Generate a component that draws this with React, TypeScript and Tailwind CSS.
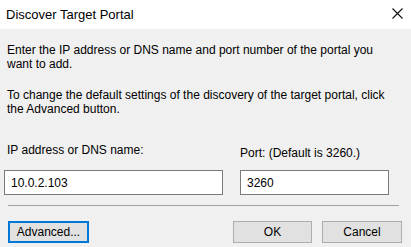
import React from 'react';

const font = { fontFamily: '"Liberation Sans", Arial, sans-serif' };

export default function App() {
  return (
    <div
      className="w-[411px] h-[247px] bg-[#f0f0f0] text-black text-[12px] overflow-hidden"
      style={font}
    >
      {/* Title bar */}
      <div className="h-[29px] bg-white flex items-center justify-between pl-[6px] pr-[8px]">
        <span className="text-[13px] leading-none">Discover Target Portal</span>
        <svg width="11" height="11" viewBox="0 0 11 11" className="mb-[2px]">
          <path d="M0.5 0.5 L10.5 10.5 M10.5 0.5 L0.5 10.5" stroke="#111" strokeWidth="1.1" fill="none" />
        </svg>
      </div>

      {/* Body */}
      <div className="pt-[14px]">
        <p className="px-[7px] leading-[14px] whitespace-nowrap">
          Enter the IP address or DNS name and port number of the portal you
          <br />
          want to add.
        </p>
        <p className="px-[7px] mt-[17px] leading-[14px] whitespace-nowrap">
          To change the default settings of the discovery of the target portal, click
          <br />
          the Advanced button.
        </p>

        <div className="flex mt-[27px] pl-[4px]">
          <div className="w-[219px] flex flex-col">
            <label className="pl-[3px] leading-[14px]">IP address or DNS name:</label>
            <div className="mt-[13px] h-[25px] bg-white border border-[#7a7a7a] flex items-center pl-[6px]">
              10.0.2.103
            </div>
          </div>
          <div className="ml-[17px] w-[149px] flex flex-col">
            <label className="pt-[3px] leading-[14px]">Port: (Default is 3260.)</label>
            <div className="mt-[10px] h-[25px] bg-white border border-[#7a7a7a] flex items-center pl-[6px]">
              3260
            </div>
          </div>
        </div>

        <div className="mt-[10px] ml-[8px] w-[391px] h-px bg-[#a0a0a0]" />

        <div className="flex items-center mt-[15px] pl-[8px]">
          <button className="w-[81px] h-[22px] bg-[#e1e1e1] border-2 border-[#0078d7] flex items-center justify-center pb-[1px]">
            Advanced...
          </button>
          <div className="flex-1" />
          <button className="w-[79px] h-[22px] bg-[#e1e1e1] border border-[#adadad] flex items-center justify-center">
            OK
          </button>
          <button className="ml-[10px] mr-[9px] w-[80px] h-[22px] bg-[#e1e1e1] border border-[#adadad] flex items-center justify-center">
            Cancel
          </button>
        </div>
      </div>
    </div>
  );
}
